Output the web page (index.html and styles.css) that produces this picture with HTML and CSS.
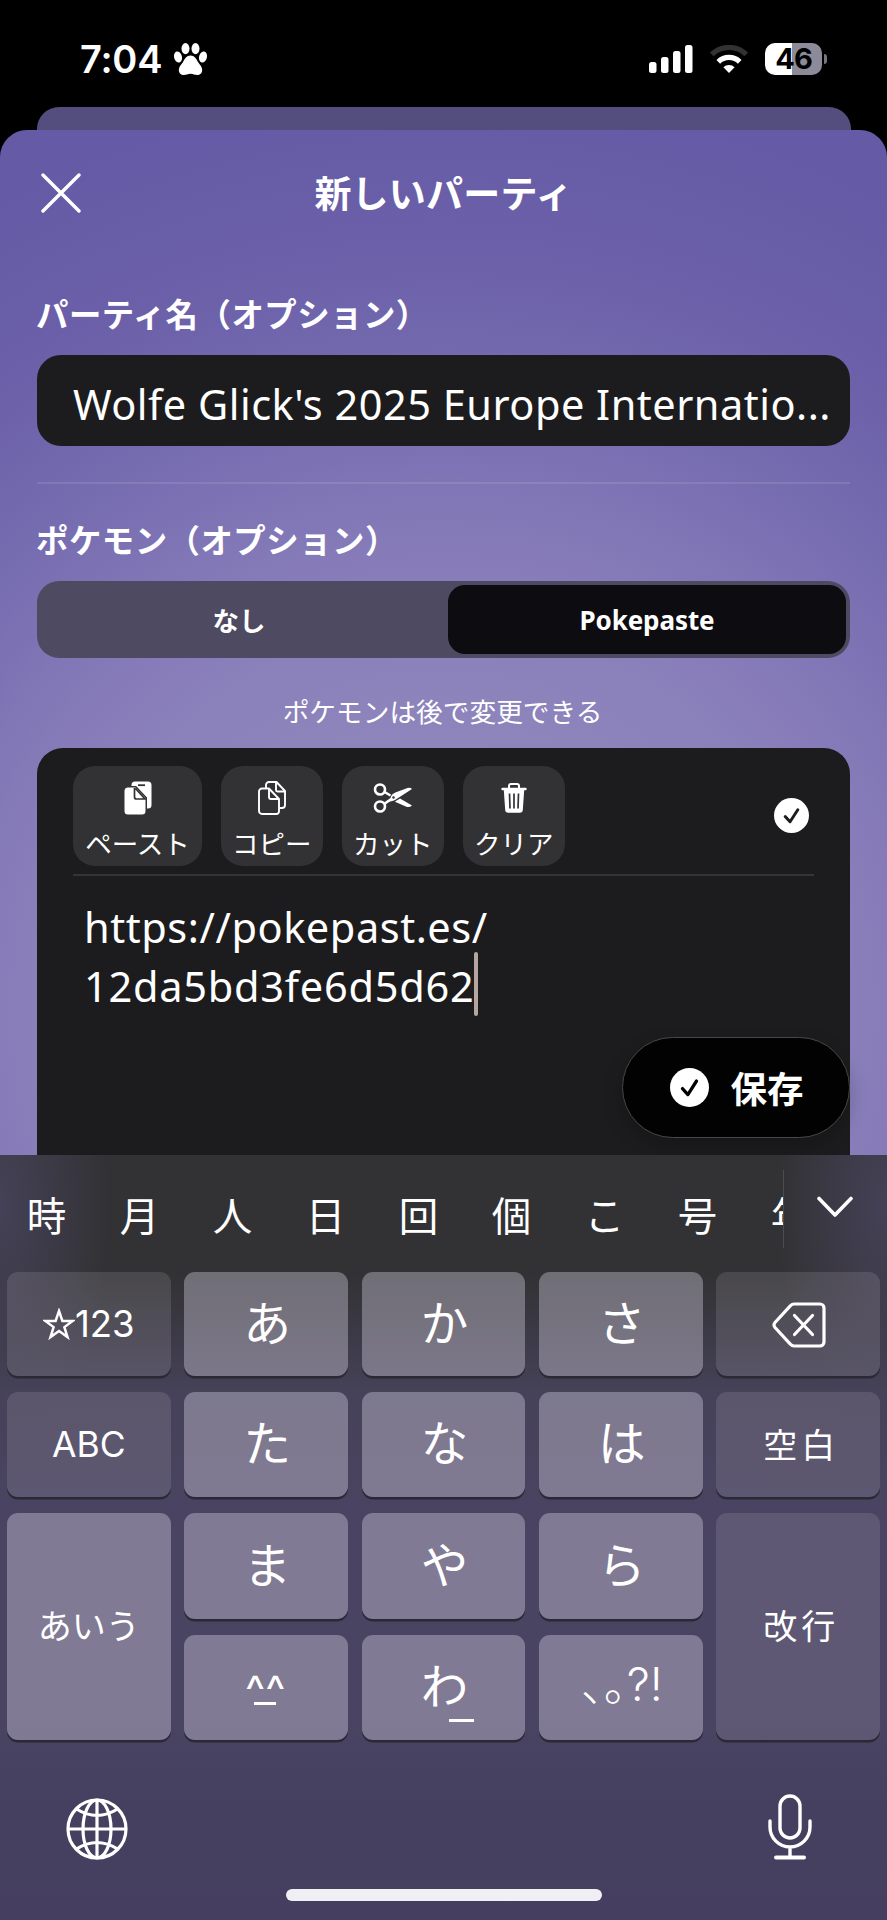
FILE: index.html
```html
<!DOCTYPE html>
<html lang="ja">
<head>
    <meta charset="UTF-8">
    <meta name="viewport" content="width=device-width, initial-scale=1.0">
    <title>新しいパーティ</title>
    <link rel="stylesheet" href="styles.css">
</head>
<body>
    <header class="status-bar">
        <div class="status-left">
            <span class="time">7:04</span>
            <svg class="paw" viewBox="0 0 33 32" fill="#fff">
                <ellipse cx="4" cy="14" rx="3.9" ry="5.6" transform="rotate(-14 4 14)"/>
                <ellipse cx="11.5" cy="5.6" rx="4" ry="5.6"/>
                <ellipse cx="21.5" cy="5.6" rx="4" ry="5.6"/>
                <ellipse cx="29" cy="14" rx="3.9" ry="5.6" transform="rotate(14 29 14)"/>
                <path d="M16.500 12.500c4 0 5.600 3 7.500 6.500 2.200 3.200 4.200 5 4.200 8 0 3-2.200 5-5 5-2.500 0-4-1.300-6.700-1.300S12.300 32 9.800 32c-2.800 0-5-2-5-5 0-3 2-4.800 4.200-8 1.900-3.500 3.500-6.500 7.500-6.500z"/>
            </svg>
        </div>
        <div class="status-right">
            <svg class="signal" viewBox="0 0 44 28" fill="#fff">
                <rect x="0" y="17" width="7.500" height="11" rx="2.500"/>
                <rect x="12" y="12" width="7.500" height="16" rx="2.500"/>
                <rect x="24" y="6" width="7.500" height="22" rx="2.500"/>
                <rect x="36" y="0" width="7.500" height="28" rx="2.500"/>
            </svg>
            <svg class="wifi" viewBox="0 0 38 28" fill="none" stroke="#fff" stroke-width="5.200">
                <path d="M1.800 9.500a24.500 24.500 0 0 1 34.400 0" stroke="#323234"/>
                <path d="M8.300 16.800a15.300 15.300 0 0 1 21.400 0"/>
                <path d="M19 28l-5.600-5.700a8 8 0 0 1 11.200 0z" fill="#fff" stroke="none"/>
            </svg>
            <div class="battery">46</div>
        </div>
    </header>

    <div class="sheet-behind"></div>
    <main class="sheet">
        <div class="sheet-header">
            <svg class="close" viewBox="0 0 40 40" fill="none" stroke="#fff" stroke-width="3.400" stroke-linecap="round">
                <path d="M2 2l36 36M38 2L2 38"/>
            </svg>
            <h1>新しいパーティ</h1>
        </div>

        <h2 class="name-label">パーティ名（オプション）</h2>
        <div class="name-input"><span>Wolfe Glick's 2025 Europe Internatio...</span></div>
        <hr class="divider">

        <h2 class="pokemon-label">ポケモン（オプション）</h2>
        <div class="segmented">
            <div class="segment">なし</div>
            <div class="segment selected">Pokepaste</div>
        </div>
        <p class="hint">ポケモンは後で変更できる</p>

        <section class="editor">
            <div class="toolbar">
                <button class="tool tool-wide">
                    <svg viewBox="0 0 28 34">
                        <path d="M11 .5h13a3.500 3.500 0 0 1 3.500 3.500v20a3.500 3.500 0 0 1-3.500 3.500H7.500V4A3.500 3.500 0 0 1 11 .5z" fill="#fff"/>
                        <path d="M14 4.200h7" stroke="#323234" stroke-width="1.800"/>
                        <path d="M4 6.500h7.500L21.500 17v13a3.500 3.500 0 0 1-3.500 3.500H4A3.500 3.500 0 0 1 .5 30V10A3.500 3.500 0 0 1 4 6.500z" fill="#fff" stroke="#323234" stroke-width="3" paint-order="stroke"/>
                        <path d="M10.500 7v9a2 2 0 0 0 2 2H21L11.500 7.500" fill="none" stroke="#323234" stroke-width="1.700"/>
                    </svg>
                    ペースト
                </button>
                <button class="tool">
                    <svg viewBox="0 0 28 34" fill="none" stroke="#fff" stroke-width="1.900" stroke-linejoin="round">
                        <path d="M8 7.500V4a3 3 0 0 1 3-3h7.500l8.500 9v14a3 3 0 0 1-3 3h-3"/>
                        <path d="M18 1.500V9a1.500 1.500 0 0 0 1.500 1.500H27"/>
                        <path d="M4 7.500h7L21 18v12.500a2.500 2.500 0 0 1-2.500 2.500H4a3 3 0 0 1-3-3V10.500a3 3 0 0 1 3-3z"/>
                        <path d="M11 8v8a2 2 0 0 0 2 2h8"/>
                    </svg>
                    コピー
                </button>
                <button class="tool">
                    <svg class="scissors" viewBox="0 0 40 34" fill="none" stroke="#fff" stroke-width="2.600">
                        <circle cx="7" cy="8.500" r="5"/>
                        <circle cx="7" cy="25.500" r="5"/>
                        <path d="M11.500 11l6 3.500"/>
                        <path d="M11 21.500l6.500-4.500c1-3.500 2.500-4.500 5.500-5.700l11.500-4.300q3-.8 4.500 1L22 19c-2 1.200-5 .4-10 5.200z" fill="#fff" stroke="none"/>
                        <path d="M22 20.500l5-3L39 24.500q-2.500 2.200-5 1.400L22.500 21z" fill="#fff" stroke="none"/>
                        <circle cx="20.500" cy="16.500" r="1.200" fill="#323234" stroke="none"/>
                    </svg>
                    カット
                </button>
                <button class="tool">
                    <svg viewBox="0 0 28 34" fill="none" stroke="#fff">
                        <path d="M9 7V5a2 2 0 0 1 2-2h6a2 2 0 0 1 2 2v2" stroke-width="2"/>
                        <path d="M2.500 8h23" stroke-width="2.400" stroke-linecap="round"/>
                        <path d="M3.800 9h20.400l-1.400 20a3 3 0 0 1-3 2.800H8.200a3 3 0 0 1-3-2.800z" fill="#fff" stroke="none"/>
                        <path d="M9.500 12.500l.5 15M14 12.500v15M18.500 12.500l-.5 15" stroke="#323234" stroke-width="1.700"/>
                    </svg>
                    クリア
                </button>
                <svg class="check" viewBox="0 0 36 36">
                    <circle cx="18" cy="18" r="18" fill="#fff"/>
                    <path d="M11.500 19l5 5.500 8-12.500" fill="none" stroke="#1c1c1e" stroke-width="3" stroke-linecap="round" stroke-linejoin="round"/>
                </svg>
            </div>
            <div class="paste-text">
                <div class="url-line">https://pokepast.es/</div>
                <div class="id-line">12da5bd3fe6d5d62<i class="caret"></i></div>
            </div>
            <button class="save">
                <svg viewBox="0 0 36 36">
                    <circle cx="18" cy="18" r="18" fill="#fff"/>
                    <path d="M11.500 19l5 5.500 8-12.500" fill="none" stroke="#000" stroke-width="3" stroke-linecap="round" stroke-linejoin="round"/>
                </svg>
                保存
            </button>
        </section>
    </main>

    <footer class="keyboard">
        <div class="candidates">
            <div class="candidate-list">
                <span>時</span><span>月</span><span>人</span><span>日</span><span>回</span><span>個</span><span>こ</span><span>号</span><span>年</span>
            </div>
            <svg class="chevron" viewBox="0 0 36 22" fill="none" stroke="#fff" stroke-width="3.600" stroke-linecap="round" stroke-linejoin="round">
                <path d="M2 2.500l16 16.500 16-16.500"/>
            </svg>
        </div>
        <div class="keys">
            <div class="key dark latin star">
                <svg viewBox="0 0 32 32" fill="none" stroke="#fff" stroke-width="2.500">
                    <path d="M16 3l3.400 9.900h10.300l-8.300 6.200 3.100 10L16 23l-8.500 6.100 3.100-10-8.300-6.200h10.300z"/>
                </svg>123
            </div>
            <div class="key">あ</div>
            <div class="key">か</div>
            <div class="key">さ</div>
            <div class="key dark backspace">
                <svg viewBox="0 0 54 46" fill="none" stroke="#fff" stroke-width="3.200" stroke-linecap="round" stroke-linejoin="round">
                    <path d="M22 2h26a4 4 0 0 1 4 4v34a4 4 0 0 1-4 4H22q-2 0-3.500-1.700L3 25.500q-2-2.500 0-5L18.500 3.700Q20 2 22 2z"/>
                    <path d="M22.500 13.500l18 19M40.500 13.500l-18 19"/>
                </svg>
            </div>

            <div class="key dark latin">ABC</div>
            <div class="key">た</div>
            <div class="key">な</div>
            <div class="key">は</div>
            <div class="key dark word">空白</div>

            <div class="key tall kana">あいう</div>
            <div class="key">ま</div>
            <div class="key">や</div>
            <div class="key">ら</div>
            <div class="key dark tall word">改行</div>

            <div class="key face"><span>^^</span><i></i></div>
            <div class="key wa"><span>わ</span><i></i></div>
            <div class="key punct">、。?!</div>
        </div>
        <div class="bottom-row">
            <svg class="globe" viewBox="0 0 62 62" fill="none" stroke="#fff" stroke-width="3.200">
                <circle cx="31" cy="31" r="29"/>
                <ellipse cx="31" cy="31" rx="14" ry="29"/>
                <path d="M31 2v58M2 31h58M10.500 11q20.500 13 41 0M10.500 51q20.500-13 41 0"/>
            </svg>
            <svg class="mic" viewBox="0 0 44 66" fill="none" stroke="#fff" stroke-width="3.400" stroke-linecap="round">
                <rect x="12" y="2" width="20" height="42" rx="10"/>
                <path d="M2 27v6a20 20 0 0 0 40 0v-6M22 53v10"/>
                <path d="M8 63.500h28" stroke-width="4"/>
            </svg>
        </div>
        <div class="home-indicator"></div>
    </footer>
</body>
</html>
```
FILE: styles.css
```css
* {
    margin: 0;
    padding: 0;
    box-sizing: border-box;
}

body {
    width: 887px;
    height: 1920px;
    overflow: hidden;
    display: flex;
    flex-direction: column;
    background: #000;
    color: #fff;
    font-family: "Noto Sans", "Noto Sans CJK JP", sans-serif;
}

svg {
    display: block;
    flex: none;
}

button {
    border: none;
    color: inherit;
    font-family: inherit;
}

/* Status bar */
.status-bar {
    height: 107px;
    padding: 11px 60px 0 80px;
    display: flex;
    align-items: center;
    justify-content: space-between;
}

.status-left,
.status-right {
    display: flex;
    align-items: center;
}

.time {
    font: 600 38px Inter, sans-serif;
    letter-spacing: -0.2px;
}

.paw {
    width: 33px;
    height: 32px;
    margin-left: 12px;
}

.signal {
    width: 44px;
    height: 28px;
    margin-right: 17px;
}

.wifi {
    width: 38px;
    height: 28px;
    margin-right: 17px;
}

.battery {
    position: relative;
    width: 57px;
    height: 32px;
    margin-right: 5px;
    border-radius: 10px;
    background: linear-gradient(90deg, #fff 47%, #8d8b99 47%);
    color: #000;
    font: 700 29px/32px Inter, sans-serif;
    letter-spacing: -1px;
    text-align: center;
}

.battery::after {
    content: "";
    position: absolute;
    right: -5px;
    top: 11px;
    width: 3px;
    height: 10px;
    border-radius: 0 3px 3px 0;
    background: #77757f;
}

/* Sheet */
.sheet-behind {
    flex: none;
    width: 814px;
    height: 23px;
    margin: 0 auto;
    border-radius: 22px 22px 0 0;
    background: #544e7e;
}

.sheet {
    height: 1025px;
    flex: none;
    padding: 0 37px;
    border-radius: 27px 27px 0 0;
    background: radial-gradient(circle at 50% 880px, #968dc1 0, #8c82bb 360px, #857ab8 480px, #766cb0 620px, #6a5fa8 780px, #655aa5 920px);
    overflow: hidden;
}

.sheet-header {
    position: relative;
    height: 128px;
    display: flex;
    align-items: center;
    justify-content: center;
}

.close {
    position: absolute;
    left: 4px;
    top: 43px;
    width: 40px;
    height: 40px;
}

h1 {
    font-size: 37px;
    line-height: 50px;
    letter-spacing: 0.2px;
}

h2 {
    margin-left: -1px;
    font-size: 32.4px;
    line-height: 50px;
    letter-spacing: 0.5px;
}

.name-label {
    margin-top: 31px;
}

.name-input {
    height: 91px;
    margin-top: 16px;
    padding: 4px 0 0 36px;
    border-radius: 24px;
    background: #1c1c1e;
    font-size: 41.5px;
    line-height: 91px;
    letter-spacing: 0.5px;
    white-space: nowrap;
}

.divider {
    height: 2px;
    margin-top: 36px;
    border: none;
    background: rgba(255, 255, 255, 0.1);
}

.pokemon-label {
    margin-top: 31px;
}

.segmented {
    height: 77px;
    margin-top: 16px;
    padding: 4px;
    display: flex;
    border-radius: 22px;
    background: #4e4a62;
}

.segment {
    flex: 1 1 0;
    padding-right: 11px;
    display: flex;
    align-items: center;
    justify-content: center;
    border-radius: 17px;
    font-size: 26.5px;
    font-weight: 700;
}

.segment.selected {
    flex: 0 0 398px;
    padding-right: 0;
    background: #0d0c11;
    font-size: 26px;
    letter-spacing: -0.1px;
}

.hint {
    margin-top: 34px;
    padding-right: 2px;
    font-size: 26.7px;
    line-height: 40px;
    text-align: center;
}

/* Pokepaste editor */
.editor {
    position: relative;
    height: 420px;
    margin-top: 16px;
    padding: 18px 36px 0;
    border-radius: 26px 26px 0 0;
    background: #1c1c1e;
}

.toolbar {
    height: 110px;
    display: flex;
    gap: 18.500px;
    border-bottom: 2px solid #343436;
}

.tool {
    width: 102.500px;
    height: 100px;
    padding-top: 15px;
    display: flex;
    flex-direction: column;
    align-items: center;
    border-radius: 22px;
    background: #323234;
    font-size: 26.5px;
    line-height: 38px;
    white-space: nowrap;
}

.tool-wide {
    width: 129px;
}

.tool svg {
    width: 28px;
    height: 34px;
    margin-bottom: 10px;
}

.tool .scissors {
    width: 40px;
}

.check {
    width: 35px;
    height: 35px;
    margin: 32px 5px 0 auto;
}

.paste-text {
    padding: 22px 11px;
    font-size: 41.5px;
    line-height: 59px;
}

.url-line {
    letter-spacing: 0.55px;
}

.id-line {
    display: flex;
    letter-spacing: 0.75px;
}

.caret {
    width: 4px;
    height: 64px;
    margin-top: -5px;
    border-radius: 2px;
    background: #b5a69f;
}

.save {
    position: absolute;
    right: 0;
    top: 289px;
    width: 228px;
    height: 101px;
    padding-left: 1px;
    display: flex;
    align-items: center;
    justify-content: center;
    gap: 22px;
    border: 1.500px solid #48484b;
    border-radius: 51px;
    background: #020202;
    box-shadow: 0 8px 20px rgba(0, 0, 0, 0.2);
    font-size: 36.500px;
    font-weight: 700;
}

.save svg {
    width: 39px;
    height: 39px;
}

/* Keyboard */
.keyboard {
    height: 765px;
    flex: none;
    display: flex;
    flex-direction: column;
    background:
        radial-gradient(ellipse 110px 260px at 0 50px, #454157 0, rgba(69, 65, 87, 0) 100%),
        radial-gradient(ellipse 110px 260px at 100% 50px, #454157 0, rgba(69, 65, 87, 0) 100%),
        linear-gradient(#323234 0, #323234 120px, #464259 240px, #4a4463 380px, #4a4463 560px, #454060 650px, #453e60 100%);
}

.candidates {
    height: 117px;
    display: flex;
}

.candidate-list {
    width: 784px;
    height: 78px;
    margin-top: 15px;
    display: flex;
    overflow: hidden;
    border-right: 1.500px solid #4c4b50;
    font-size: 39.5px;
    line-height: 92px;
}

.candidate-list span {
    flex: 0 0 93px;
    text-align: center;
}

.chevron {
    width: 36px;
    height: 22px;
    margin: 41px 0 0 33px;
}

.keys {
    padding: 0 7px;
    display: grid;
    grid-template-columns: repeat(5, 1fr);
    grid-template-rows: 104px 105px 106px 104.500px;
    gap: 16px 13.700px;
}

.key {
    display: flex;
    align-items: center;
    justify-content: center;
    padding: 0 0 3px 2px;
    border-radius: 11px;
    background: rgba(225, 220, 235, 0.36);
    box-shadow: 0 2.500px 0 #2b2936;
    font-size: 47.5px;
    line-height: 1;
}

.key.dark {
    background: rgba(220, 215, 220, 0.14);
}

.key.tall {
    grid-row: span 2;
}

.key.latin {
    padding: 0;
    font-family: Inter, sans-serif;
    font-size: 35.5px;
}

.key.star {
    font-size: 36.5px;
}

.star svg {
    width: 32px;
    height: 32px;
}

.backspace svg {
    width: 54px;
    height: 46px;
    margin-top: 4px;
}

.key.word,
.key.kana {
    padding: 0;
    font-size: 34px;
}

.key.word {
    padding-left: 6px;
    letter-spacing: 4px;
}

.key.face {
    flex-direction: column;
    padding: 0 2px 0 0;
    font-family: Inter, sans-serif;
    font-size: 43px;
}

.face span {
    height: 33px;
}

.face i {
    width: 22px;
    height: 3px;
    background: #fff;
}

.wa {
    position: relative;
}

.wa i {
    position: absolute;
    left: 87px;
    top: 84px;
    width: 25px;
    height: 3px;
    background: #fff;
}

.key.punct {
    padding: 0 0 6px 2px;
    font-family: Inter, "Noto Sans CJK JP", sans-serif;
    font-size: 46px;
    font-weight: 300;
    font-feature-settings: "halt";
}

.bottom-row {
    padding: 54px 75px 0 66px;
    display: flex;
    justify-content: space-between;
}

.globe {
    width: 62px;
    height: 62px;
    margin-top: 4px;
}

.mic {
    width: 44px;
    height: 66px;
}

.home-indicator {
    width: 316px;
    height: 12px;
    margin: 29px auto 0;
    border-radius: 6px;
    background: #f0eff3;
}
```
